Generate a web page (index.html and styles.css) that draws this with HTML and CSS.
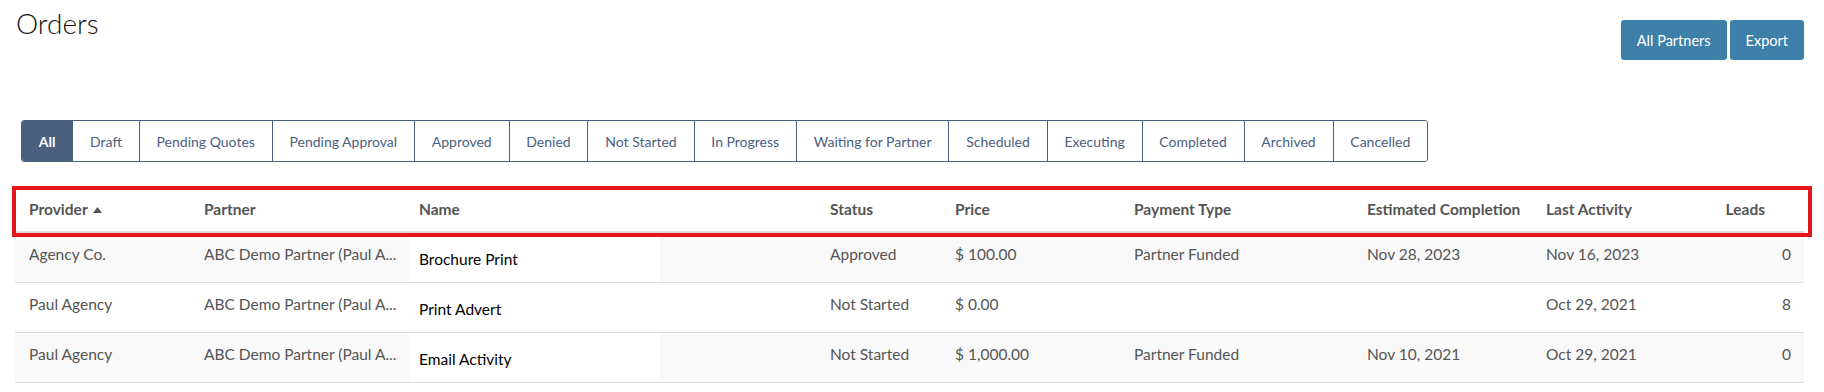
FILE: index.html
```html
<!DOCTYPE html>
<html lang="en">
<head>
  <meta charset="UTF-8">
  <meta name="viewport" content="width=device-width, initial-scale=1.0">
  <title>Orders</title>
  <link rel="stylesheet" href="styles.css">
</head>
<body>
  <div class="page">
    <div class="page-header">
      <h1 class="page-title">Orders</h1>
      <div class="header-actions">
        <button class="action-button">All Partners</button>
        <button class="action-button">Export</button>
      </div>
    </div>

    <div class="status-tabs">
      <button class="status-tab active">All</button>
      <button class="status-tab">Draft</button>
      <button class="status-tab">Pending Quotes</button>
      <button class="status-tab">Pending Approval</button>
      <button class="status-tab">Approved</button>
      <button class="status-tab">Denied</button>
      <button class="status-tab">Not Started</button>
      <button class="status-tab">In Progress</button>
      <button class="status-tab">Waiting for Partner</button>
      <button class="status-tab">Scheduled</button>
      <button class="status-tab">Executing</button>
      <button class="status-tab">Completed</button>
      <button class="status-tab">Archived</button>
      <button class="status-tab">Cancelled</button>
    </div>

    <div class="orders-wrap">
      <div class="header-highlight"></div>
      <table class="orders-table">
        <colgroup>
          <col style="width: 175px">
          <col style="width: 215px">
          <col style="width: 411px">
          <col style="width: 125px">
          <col style="width: 179px">
          <col style="width: 233px">
          <col style="width: 179px">
          <col style="width: 148px">
          <col style="width: 124px">
        </colgroup>
        <thead>
          <tr>
            <th>Provider
              <svg class="sort-icon" width="9" height="6" viewBox="0 0 9 6" xmlns="http://www.w3.org/2000/svg">
                <path d="M0 6L4.5 0L9 6Z" fill="currentColor"/>
              </svg>
            </th>
            <th>Partner</th>
            <th>Name</th>
            <th>Status</th>
            <th>Price</th>
            <th>Payment Type</th>
            <th>Estimated Completion</th>
            <th>Last Activity</th>
            <th class="leads-col">Leads</th>
          </tr>
        </thead>
        <tbody>
          <tr>
            <td>Agency Co.</td>
            <td class="partner-cell">ABC Demo Partner (Paul A...</td>
            <td class="name-cell"><div class="name-box">Brochure Print</div></td>
            <td>Approved</td>
            <td>$ 100.00</td>
            <td>Partner Funded</td>
            <td>Nov 28, 2023</td>
            <td>Nov 16, 2023</td>
            <td class="leads-col">0</td>
          </tr>
          <tr>
            <td>Paul Agency</td>
            <td class="partner-cell">ABC Demo Partner (Paul A...</td>
            <td class="name-cell"><div class="name-box">Print Advert</div></td>
            <td>Not Started</td>
            <td>$ 0.00</td>
            <td></td>
            <td></td>
            <td>Oct 29, 2021</td>
            <td class="leads-col">8</td>
          </tr>
          <tr>
            <td>Paul Agency</td>
            <td class="partner-cell">ABC Demo Partner (Paul A...</td>
            <td class="name-cell"><div class="name-box">Email Activity</div></td>
            <td>Not Started</td>
            <td>$ 1,000.00</td>
            <td>Partner Funded</td>
            <td>Nov 10, 2021</td>
            <td>Oct 29, 2021</td>
            <td class="leads-col">0</td>
          </tr>
        </tbody>
      </table>
    </div>
  </div>
</body>
</html>
```

FILE: styles.css
```css
:root {
  --slate: #4b607f;
  --action-blue: #3f80a8;
  --text-grey: #555555;
  --row-stripe: #f9f9f9;
  --line: #dddddd;
  --highlight-red: #e4171e;
}

body {
  font-family: Lato, 'Liberation Sans', sans-serif;
  margin: 0;
  padding: 0;
  background-color: #ffffff;
  color: var(--text-grey);
}

.page {
  padding: 8px 20px 0 15px;
}

.page-header {
  display: flex;
  justify-content: space-between;
  align-items: flex-start;
  height: 52px;
}

.page-title {
  margin: -1px 0 0 1px;
  font-size: 28px;
  line-height: 32px;
  font-weight: 300;
  color: #111111;
}

.header-actions {
  display: flex;
  gap: 3px;
  margin-top: 12px;
}

.action-button {
  height: 40px;
  padding: 0 16px;
  border: none;
  border-radius: 3px;
  background-color: var(--action-blue);
  color: #ffffff;
  font-family: inherit;
  font-size: 14.5px;
  cursor: pointer;
}

.status-tabs {
  display: inline-flex;
  margin: 60px 0 0 6px;
  border: 1px solid var(--slate);
  border-radius: 3px;
  overflow: hidden;
}

.status-tab {
  height: 40px;
  padding: 0 16.8px;
  border: none;
  border-left: 1px solid var(--slate);
  background-color: #ffffff;
  color: var(--slate);
  font-family: inherit;
  font-size: 14px;
  cursor: pointer;
}

.status-tab:first-child {
  border-left: none;
}

.status-tab.active {
  background-color: var(--slate);
  color: #ffffff;
  font-weight: 700;
}

.orders-wrap {
  position: relative;
  margin-top: 25px;
}

.header-highlight {
  position: absolute;
  top: -1px;
  left: -3px;
  right: -8px;
  height: 51px;
  border: 4px solid var(--highlight-red);
  box-sizing: border-box;
  pointer-events: none;
}

.orders-table {
  width: 100%;
  border-collapse: collapse;
  table-layout: fixed;
  font-size: 15.5px;
}

.orders-table th {
  text-align: left;
  padding: 12px 14px;
  line-height: 20px;
  font-weight: 700;
  color: var(--text-grey);
  border-bottom: 2px solid var(--line);
  white-space: nowrap;
}

.sort-icon {
  margin-left: 2px;
  vertical-align: 2px;
}

.orders-table td {
  padding: 10px 14px 17px;
  line-height: 22px;
  vertical-align: top;
  border-bottom: 1px solid var(--line);
  white-space: nowrap;
}

.orders-table tbody tr:nth-child(odd) {
  background-color: var(--row-stripe);
}

.orders-table .leads-col {
  text-align: right;
}

.orders-table th.leads-col {
  padding-right: 39px;
}

.orders-table td.leads-col {
  padding-right: 13px;
}

.orders-table td.partner-cell {
  padding-right: 0;
}

.orders-table td.name-cell {
  padding: 0;
}

.name-box {
  width: 251px;
  height: 49px;
  margin-left: 4px;
  padding: 15px 10px 0;
  box-sizing: border-box;
  background-color: #ffffff;
  color: #000000;
}
```
